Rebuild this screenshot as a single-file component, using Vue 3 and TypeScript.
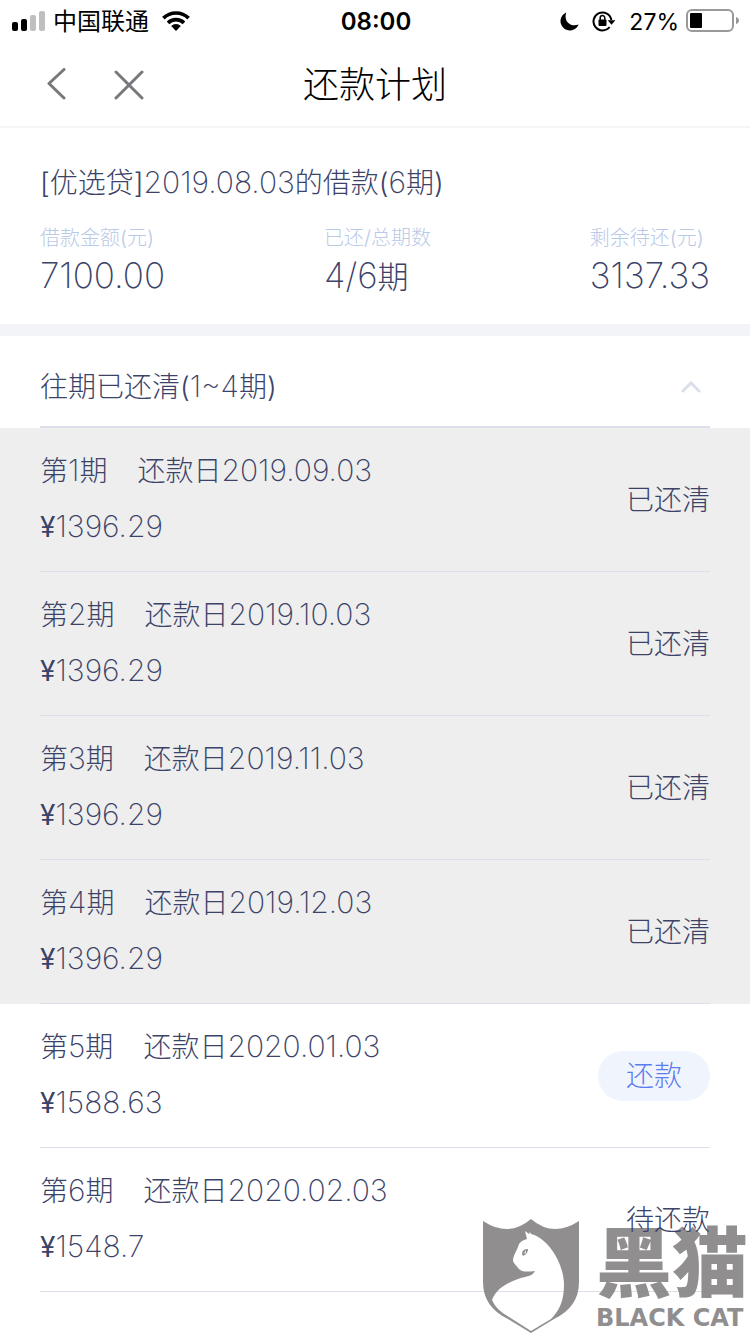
<script setup lang="ts">
import { computed, ref } from 'vue'

interface Period {
  no: number
  date: string
  amount: string
  status: 'paid' | 'due' | 'pending'
}

const periods: Period[] = [
  { no: 1, date: '2019.09.03', amount: '1396.29', status: 'paid' },
  { no: 2, date: '2019.10.03', amount: '1396.29', status: 'paid' },
  { no: 3, date: '2019.11.03', amount: '1396.29', status: 'paid' },
  { no: 4, date: '2019.12.03', amount: '1396.29', status: 'paid' },
  { no: 5, date: '2020.01.03', amount: '1588.63', status: 'due' },
  { no: 6, date: '2020.02.03', amount: '1548.7', status: 'pending' },
]

const expanded = ref(true)
const visible = computed(() => periods.filter((p) => expanded.value || p.status !== 'paid'))
</script>

<template>
  <div class="screen">
    <div class="status">
      <div class="status-side">
        <svg class="signal" width="34" height="20" viewBox="0 0 34 20" aria-hidden="true">
          <rect x="0" y="11" width="6" height="9" rx="2" />
          <rect x="9" y="8" width="6" height="12" rx="2" />
          <rect x="18" y="4" width="6" height="16" rx="2" class="off" />
          <rect x="27" y="0" width="6" height="20" rx="2" class="off" />
        </svg>
        <span class="carrier">中国联通</span>
        <svg class="wifi" width="28" height="20" viewBox="0 0 28 20" aria-hidden="true">
          <g fill="none" stroke="#000" stroke-width="3.6">
            <path d="M1.4 7.1A18 18 0 0 1 26.6 7.1" />
            <path d="M6 11.9A11.5 11.5 0 0 1 22 11.9" />
          </g>
          <path d="M9.2 15.1A6.8 6.8 0 0 1 18.8 15.1L14 20Z" />
        </svg>
      </div>
      <span class="clock">08:00</span>
      <div class="status-side right">
        <svg width="19" height="19" viewBox="0 0 19 19" aria-hidden="true">
          <path d="M6.2.4C3.500 9 10 15.500 18.600 12.600A9.400 9.400 0 1 1 6.200.4Z" />
        </svg>
        <svg class="lock" width="24" height="22" viewBox="0 0 24 22" aria-hidden="true">
          <path d="M17.600 17A9 9 0 1 1 19.400 10" fill="none" stroke="#000" stroke-width="2" />
          <path d="M15.600 10.200H23.400L19.500 14.800Z" />
          <rect x="6.500" y="9.500" width="8" height="6.500" rx="1" />
          <path d="M8.200 10V7.800a2.300 2.300 0 0 1 4.600 0v2.200" fill="none" stroke="#000" stroke-width="1.500" />
        </svg>
        <span class="percent">27%</span>
        <svg width="54" height="24" viewBox="0 0 54 24" aria-hidden="true">
          <rect x="1" y="1" width="46" height="21" rx="5" fill="none" stroke="#999" stroke-width="2" />
          <rect x="4" y="4" width="12" height="15" rx="1" />
          <path d="M50 8Q53 9 53 11.500T50 15Z" fill="#999" />
        </svg>
      </div>
    </div>

    <header class="nav">
      <div class="nav-buttons">
        <button type="button" aria-label="返回">
          <svg width="20" height="34" viewBox="0 0 20 34"><path d="M17 1.500L2 15.500L17 30" /></svg>
        </button>
        <button type="button" aria-label="关闭">
          <svg width="30" height="30" viewBox="0 0 30 30"><path d="M2 2L28 28M28 2L2 28" /></svg>
        </button>
      </div>
      <h1>还款计划</h1>
    </header>

    <section class="summary">
      <h2>[优选贷]<span class="num">2019.08.03</span>的借款(<span class="num">6</span>期)</h2>
      <dl>
        <div><dt>借款金额(元)</dt><dd><span class="big">7100.00</span></dd></div>
        <div><dt>已还/总期数</dt><dd><span class="big">4/6</span>期</dd></div>
        <div><dt>剩余待还(元)</dt><dd><span class="big">3137.33</span></dd></div>
      </dl>
    </section>

    <main>
      <button class="toggle" type="button" :aria-expanded="expanded" @click="expanded = !expanded">
        <span>往期已还清(<span class="num">1~4</span>期)</span>
        <svg :class="{ closed: !expanded }" width="20" height="12" viewBox="0 0 20 12"><path d="M2 10L10 2L18 10" /></svg>
      </button>
      <ul>
        <li v-for="p in visible" :key="p.no" :class="p.status">
          <div class="row">
            <div>
              <p class="title"><span>第<span class="num">{{ p.no }}</span>期</span><span>还款日<span class="num">{{ p.date }}</span></span></p>
              <p class="amount"><span class="yen">¥</span><span class="num">{{ p.amount }}</span></p>
            </div>
            <button v-if="p.status === 'due'" class="pay" type="button">还款</button>
            <span v-else class="state">{{ p.status === 'paid' ? '已还清' : '待还款' }}</span>
          </div>
        </li>
      </ul>
    </main>

    <div class="watermark">
      <svg width="98" height="116" viewBox="0 0 98 116" aria-hidden="true">
        <g fill="#888687" fill-rule="evenodd">
          <path d="M1 3Q27 20 49 1Q71 20 97 3V64Q97 89 72 101L49 115L26 101Q1 89 1 64ZM43 13L45 21C41 22 37 24 36 29C34 34 32 36 31 42C31 45 35 48 37 51C40 54 44 54 53 53C51 57 47 58 43 59C31 62 15 68 10 82Q14 92 27 99L49 113L69 101C77 93 82 83 82 67C82 45 66 20 49 16L48 14L47 16Z" />
          <path d="M40 36Q40 31 46 31Q46 36 41 38ZM44 32L42 36L44 35Z" />
        </g>
      </svg>
      <div class="brand">
        <span class="brand-cn">黑猫</span>
        <span class="brand-en">BLACK CAT</span>
      </div>
    </div>
  </div>
</template>

<style>
body {
  background: #fff;
}
</style>

<style scoped>
.screen {
  position: relative;
  min-height: 100vh;
  overflow: hidden;
  background: #fff;
  color: #3b4368;
  font-family: Inter, "Noto Sans CJK SC", sans-serif;
  font-size: 28px;
  font-weight: 300;
  line-height: 40px;
}
h1, h2, p, dl, dd, ul {
  margin: 0;
  padding: 0;
  font-weight: inherit;
}
ul {
  list-style: none;
}
button {
  padding: 0;
  border: 0;
  background: none;
  color: inherit;
  font: inherit;
  text-align: left;
}
.num, .big {
  font-weight: 200;
  line-height: 1;
}
.num {
  font-size: 30px;
}
.big {
  font-size: 35px;
}
.status {
  display: grid;
  grid-template-columns: 1fr auto 1fr;
  align-items: center;
  height: 40px;
  padding: 0 10px 0 12px;
  color: #000;
  font-size: 24px;
  font-weight: 400;
}
.status-side {
  display: flex;
  align-items: center;
}
.off {
  fill: #bfbfbf;
}
.carrier, .clock, .percent {
  padding-top: 2px;
}
.carrier {
  margin: 0 13px 0 7px;
}
.clock {
  font-weight: 600;
}
.right {
  justify-content: flex-end;
}
.lock {
  margin: 0 13px;
}
.percent {
  margin-right: 7px;
  font-size: 23px;
}
.nav {
  display: grid;
  grid-template-columns: 1fr auto 1fr;
  align-items: center;
  height: 82px;
  padding: 4px 47px 0;
  border-bottom: 2px solid #f5f5f5;
  color: #000;
}
.nav-buttons {
  display: flex;
  align-items: center;
  gap: 47px;
}
.nav button {
  display: flex;
}
.nav path {
  fill: none;
  stroke: #77787b;
  stroke-width: 3;
  stroke-linecap: round;
  stroke-linejoin: round;
}
h1 {
  font-size: 36px;
}
.summary {
  padding: 35px 40px 25px;
  border-bottom: 12px solid #f3f4f7;
}
h2 {
  font-size: 28px;
}
dl {
  display: flex;
  justify-content: space-between;
  padding-top: 20px;
}
dt {
  color: #b9c9e8;
  font-size: 20px;
  line-height: 30px;
}
dd {
  padding-top: 2px;
  font-size: 31px;
  line-height: 44px;
}
.toggle {
  display: flex;
  justify-content: space-between;
  align-items: center;
  width: calc(100% - 80px);
  height: 92px;
  margin: 0 40px;
  padding: 11px 9px 0 0;
  border-bottom: 2px solid #dbdfea;
}
.toggle path {
  fill: none;
  stroke: #dbdfea;
  stroke-width: 3;
  stroke-linecap: round;
}
.closed {
  transform: rotate(180deg);
}
li {
  padding: 0 40px;
}
.paid {
  background: #eee;
}
.row {
  display: flex;
  justify-content: space-between;
  align-items: center;
  padding: 15px 0 16px;
  border-bottom: 1px solid #dbdfea;
}
.title, .amount {
  line-height: 56px;
}
.title {
  display: flex;
  gap: 30px;
}
.yen {
  font-weight: 400;
}
.pay, .state {
  margin-top: 2px;
}
.state {
  position: relative;
  z-index: 1;
}
.pay {
  padding: 5px 28px;
  border-radius: 25px;
  background: #f0f5fd;
  color: #5b7bf0;
}
.watermark {
  position: absolute;
  right: 2px;
  bottom: 0;
  display: flex;
  gap: 16px;
  color: #888687;
  opacity: 0.93;
}
.brand {
  display: flex;
  flex-direction: column;
}
.brand-cn {
  font-family: "Noto Sans CJK SC", sans-serif;
  font-size: 76px;
  font-weight: 900;
  line-height: 80px;
}
.brand-en {
  padding-top: 4px;
  font-family: "DejaVu Sans", sans-serif;
  font-size: 24px;
  font-weight: 700;
  line-height: 32px;
}
</style>
